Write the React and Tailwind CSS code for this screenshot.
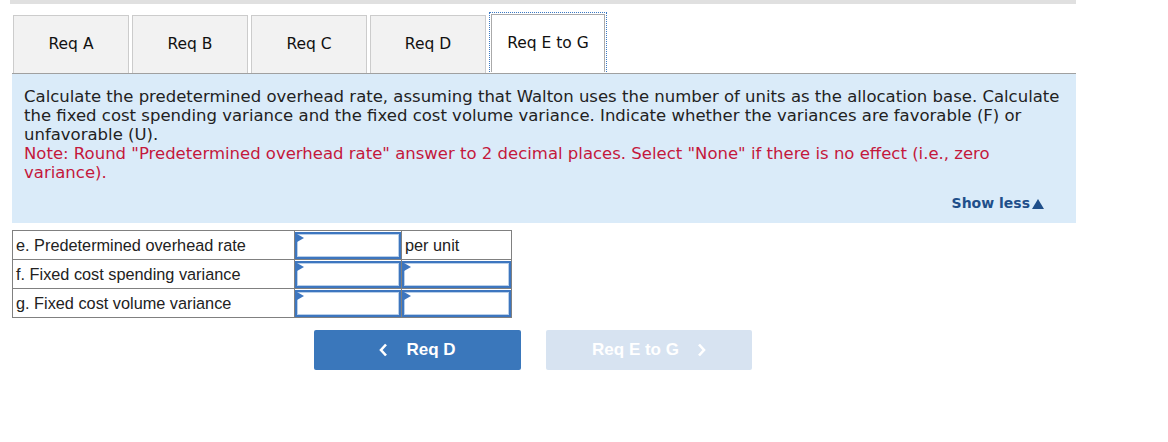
import React from "react";

function Tab({ label, active }) {
  if (active) {
    return (
      <div className="w-[118px] h-[62px] -mb-px p-[1px] border border-dotted border-[#3a78c3] bg-white">
        <div className="w-full h-full border border-[#aaa] border-b-0 flex items-center justify-center text-[15.5px] text-[#111] font-['DejaVu_Sans',sans-serif]">
          {label}
        </div>
      </div>
    );
  }
  return (
    <div className="w-[116px] h-[58px] border border-[#cccccc] border-b-0 bg-[#f2f2f2] flex items-center justify-center text-[15.5px] text-[#111] font-['DejaVu_Sans',sans-serif]">
      {label}
    </div>
  );
}

function InputBox() {
  return (
    <div className="relative h-[27px] border-2 border-[#3d76bf] bg-white shadow-[inset_0_0_0_1px_#b9cfe9]">
      <svg className="absolute left-0 top-0" width="8" height="9" viewBox="0 0 8 9">
        <polygon points="0,0 7,4 0,8" fill="#3d76bf" />
      </svg>
    </div>
  );
}

export default function App() {
  return (
    <div className="w-[1168px] h-[442px] bg-white relative overflow-hidden">
      <div className="ml-[10px] w-[1066px] h-[4px] bg-[#e0e0e0]" />
      <div className="ml-[13px] mt-[8px] flex items-end gap-[3px]">
        <Tab label="Req A" />
        <Tab label="Req B" />
        <Tab label="Req C" />
        <Tab label="Req D" />
        <Tab label="Req E to G" active />
      </div>
      <div className="ml-[12px] w-[1064px] h-[150px] bg-[#daebf9] border-t border-[#a0a0a0] px-[12px] pt-[13px] font-['DejaVu_Sans',sans-serif] text-[16.5px] leading-[19px] relative">
        <p className="text-[#222]">
          Calculate the predetermined overhead rate, assuming that Walton uses the number of units as the allocation base. Calculate the fixed cost spending variance and the fixed cost volume variance. Indicate whether the variances are favorable (F) or unfavorable (U).
        </p>
        <p className="text-[#c4183c]">
          Note: Round "Predetermined overhead rate" answer to 2 decimal places. Select "None" if there is no effect (i.e., zero variance).
        </p>
        <div className="absolute right-[32px] top-[120px] flex items-center text-[14px] font-bold text-[#1f4f8a]">
          Show less
          <svg className="ml-[2px]" width="12" height="10" viewBox="0 0 12 10">
            <polygon points="6,0 12,10 0,10" fill="#1f4f8a" />
          </svg>
        </div>
      </div>
      <table className="ml-[12px] mt-[7px] border-collapse font-['Liberation_Sans',Arial,sans-serif] text-[16.3px] text-[#222]">
        <tbody>
          <tr className="h-[29px]">
            <td className="w-[282px] border border-[#808080] pl-[3px] leading-none">e. Predetermined overhead rate</td>
            <td className="w-[107px] border border-[#808080] p-0"><InputBox /></td>
            <td className="w-[110px] border border-[#808080] pl-[3px] leading-none">per unit</td>
          </tr>
          <tr className="h-[29px]">
            <td className="border border-[#808080] pl-[3px] leading-none">f. Fixed cost spending variance</td>
            <td className="border border-[#808080] p-0"><InputBox /></td>
            <td className="border border-[#808080] p-0"><InputBox /></td>
          </tr>
          <tr className="h-[29px]">
            <td className="border border-[#808080] pl-[3px] leading-none">g. Fixed cost volume variance</td>
            <td className="border border-[#808080] p-0"><InputBox /></td>
            <td className="border border-[#808080] p-0"><InputBox /></td>
          </tr>
        </tbody>
      </table>
      <div className="ml-[314px] mt-[12px] flex gap-[25px] font-['Liberation_Sans',Arial,sans-serif] text-[17px] font-bold text-white">
        <div className="w-[207px] h-[40px] rounded-[2px] bg-[#3a77bb] flex items-center justify-center">
          <svg className="mr-[18px]" width="9" height="14" viewBox="0 0 9 14">
            <polyline points="7,1.5 2,7 7,12.5" fill="none" stroke="white" strokeWidth="2.6" />
          </svg>
          Req D
        </div>
        <div className="w-[206px] h-[40px] rounded-[2px] bg-[#d7e3f1] flex items-center justify-center">
          Req E to G
          <svg className="ml-[18px]" width="9" height="14" viewBox="0 0 9 14">
            <polyline points="2,1.5 7,7 2,12.5" fill="none" stroke="white" strokeWidth="2.6" />
          </svg>
        </div>
      </div>
    </div>
  );
}
